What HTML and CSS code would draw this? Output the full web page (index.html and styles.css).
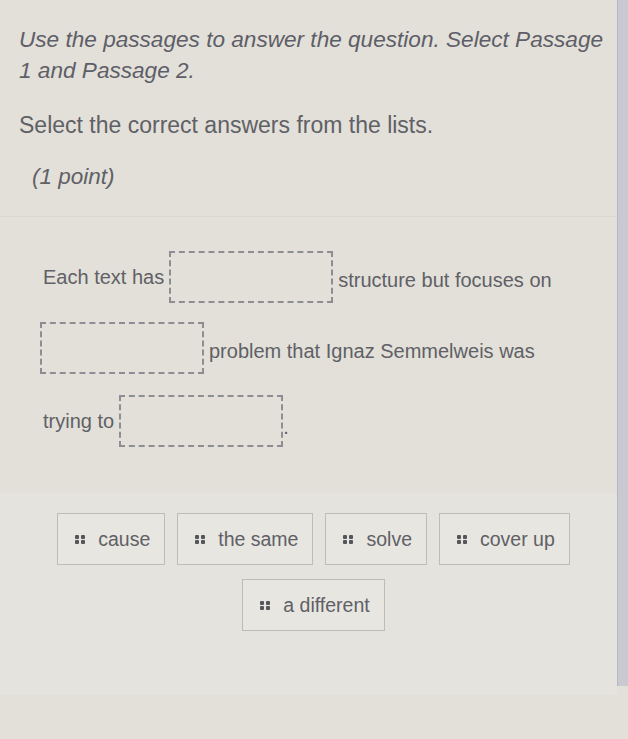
FILE: index.html
```
<!DOCTYPE html>
<html lang="en">
    <head>
        <meta charset="UTF-8" />
        <meta name="viewport" content="width=device-width, initial-scale=1.0" />
        <title>Question</title>
        <link rel="stylesheet" href="styles.css">
    </head>
    <body>
        <div class="page">
            <div class="content">
                <div class="question">
                    <p class="prompt">Use the passages to answer the question. Select Passage 1 and Passage 2.</p>
                    <p class="instruction">Select the correct answers from the lists.</p>
                    <p class="points">(1 point)</p>
                </div>

                <div class="sentence">
                    <div class="line">
                        <span>Each text has</span>
                        <span class="drop"></span>
                        <span class="low">structure but focuses on</span>
                    </div>
                    <div class="line line-2">
                        <span class="drop"></span>
                        <span class="low">problem that Ignaz Semmelweis was</span>
                    </div>
                    <div class="line line-3">
                        <span>trying to</span>
                        <span class="drop"></span>
                        <span class="dot">.</span>
                    </div>
                </div>

                <div class="options">
                    <div class="option"><span class="grip"></span>cause</div>
                    <div class="option"><span class="grip"></span>the same</div>
                    <div class="option"><span class="grip"></span>solve</div>
                    <div class="option"><span class="grip"></span>cover up</div>
                    <div class="option"><span class="grip"></span>a different</div>
                </div>
            </div>
            <div class="scroll-track"></div>
        </div>
    </body>
</html>
```

FILE: styles.css
```
body {
    margin: 0;
    background-color: #e2e0d9;
    font-family: "Liberation Sans", Arial, sans-serif;
    color: #606066;
}
.page {
    display: flex;
    align-items: flex-start;
}
.content {
    flex: 1;
}
.scroll-track {
    width: 10px;
    height: 686px;
    background-color: #c9c9d2;
    border-left: 1px solid #b8b8c4;
}
.question {
    padding: 24px 0 0 19px;
}
.prompt {
    margin: 0;
    font-size: 22.6px;
    font-style: italic;
    line-height: 31px;
    color: #5e5e68;
}
.instruction {
    margin: 25px 0 0;
    font-size: 23px;
    line-height: 28px;
}
.points {
    margin: 24px 0 0 13px;
    font-size: 22.5px;
    font-style: italic;
    line-height: 28px;
}
.sentence {
    margin-top: 25px;
    border-top: 1px solid #dad8d1;
    padding: 34px 0 0 43px;
    font-size: 20px;
}
.line {
    display: flex;
    align-items: center;
    gap: 5px;
}
.line-2 {
    margin-top: 19px;
    margin-left: -3px;
}
.line-3 {
    margin-top: 21px;
}
.drop {
    width: 160px;
    height: 48px;
    border: 2px dashed #8d8d94;
}
.low {
    margin-top: 6px;
}
.dot {
    margin-left: -5px;
    margin-top: 12px;
}
.options {
    margin-top: 47px;
    padding: 19px 40px 64px 50px;
    display: flex;
    flex-wrap: wrap;
    justify-content: center;
    gap: 14px 12px;
    background-color: #e4e3dd;
}
.option {
    display: flex;
    align-items: center;
    gap: 13px;
    height: 50px;
    padding: 0 14px 0 17px;
    border: 1px solid #bdbcb8;
    background-color: #e7e6e0;
    font-size: 19.5px;
}
.grip {
    position: relative;
    width: 10px;
    height: 10px;
}
.grip::before {
    content: "";
    position: absolute;
    left: 0;
    top: 1px;
    width: 4px;
    height: 4px;
    border-radius: 1px;
    background-color: #55555c;
    box-shadow: 6px 0 0 #55555c, 0 5px 0 #55555c, 6px 5px 0 #55555c;
}
```
